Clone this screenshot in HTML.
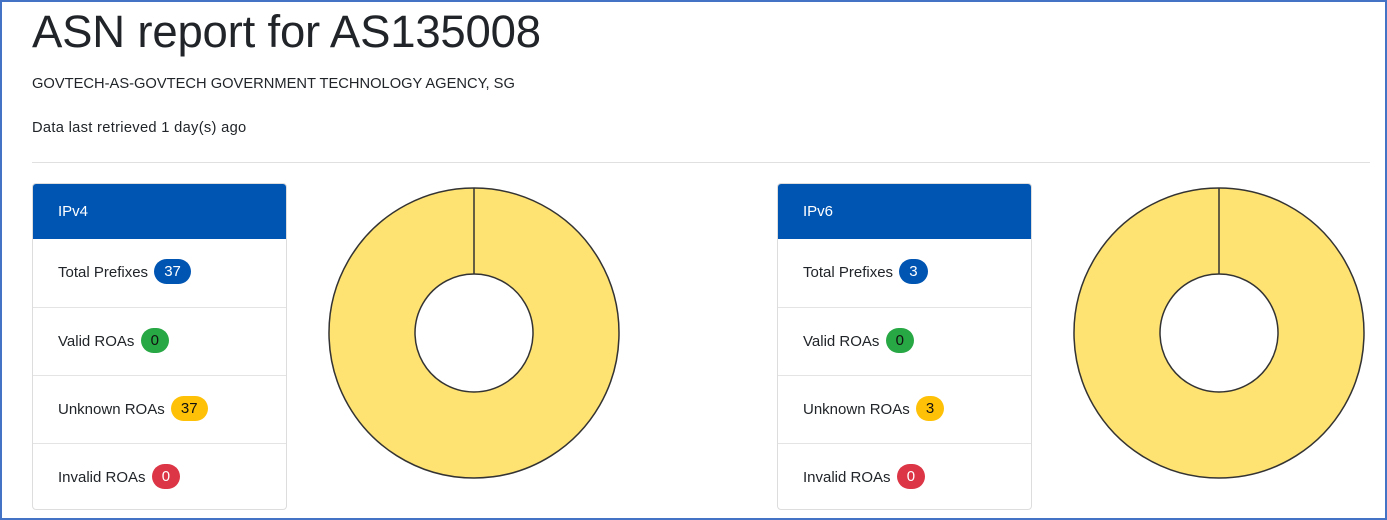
<!DOCTYPE html>
<html><head><style>
body{margin:0;width:1387px;height:520px;overflow:hidden;background:#fff;font-family:"Liberation Sans",sans-serif;color:#212529;position:relative}
.frame{position:absolute;left:0;top:0;width:1383px;height:516px;border:2px solid #4472c4}
h1{position:absolute;left:32px;top:6px;margin:0;font-size:45.5px;font-weight:400;letter-spacing:-0.2px}
.t{position:absolute;left:32px;font-size:14.7px}
hr{position:absolute;left:32px;top:162px;width:1338px;margin:0;border:0;border-top:1px solid #e0e0e0}
.card{position:absolute;top:183px;width:255px;height:327px;border:1px solid #ddd;border-radius:4px;overflow:hidden;box-sizing:border-box}
.hd{background:#0055b3;color:#fff;height:55px;line-height:55px;padding-left:25px;font-size:15px}
.row{height:68px;line-height:68px;padding-left:25px;font-size:15px;border-top:1px solid #e4e4e4;box-sizing:border-box}
.b{display:inline-block;height:25px;line-height:25px;border-radius:13px;padding:0 10px;font-size:15px;vertical-align:middle;margin-left:2px;margin-top:-3px}
.bl{background:#0055b3;color:#fff}.g{background:#28a745;color:#111}.y{background:#ffc107;color:#111}.r{background:#dc3545;color:#fff}
svg{position:absolute}
</style></head><body>
<div class="frame"></div>
<h1>ASN report for AS135008</h1>
<div class="t" style="top:76px">GOVTECH-AS-GOVTECH GOVERNMENT TECHNOLOGY AGENCY, SG</div>
<div class="t" style="top:120px;letter-spacing:0.3px">Data last retrieved 1 day(s) ago</div>
<hr>
<div class="card" style="left:32px"><div class="hd">IPv4</div>
<div class="row" style="border-top:0">Total Prefixes <span class="b bl">37</span></div>
<div class="row">Valid ROAs <span class="b g">0</span></div>
<div class="row">Unknown ROAs <span class="b y">37</span></div>
<div class="row">Invalid ROAs <span class="b r">0</span></div></div>
<div class="card" style="left:777px"><div class="hd">IPv6</div>
<div class="row" style="border-top:0">Total Prefixes <span class="b bl">3</span></div>
<div class="row">Valid ROAs <span class="b g">0</span></div>
<div class="row">Unknown ROAs <span class="b y">3</span></div>
<div class="row">Invalid ROAs <span class="b r">0</span></div></div>
<svg style="left:324px;top:183px" width="300" height="300"><path fill-rule="evenodd" d="M150 5A145 145 0 1 1 149.99 5ZM150 91A59 59 0 1 0 150.01 91Z" fill="#fee272" stroke="#333" stroke-width="1.5"/><line x1="150" y1="5" x2="150" y2="91" stroke="#333" stroke-width="1.5"/></svg>
<svg style="left:1069px;top:183px" width="300" height="300"><path fill-rule="evenodd" d="M150 5A145 145 0 1 1 149.99 5ZM150 91A59 59 0 1 0 150.01 91Z" fill="#fee272" stroke="#333" stroke-width="1.5"/><line x1="150" y1="5" x2="150" y2="91" stroke="#333" stroke-width="1.5"/></svg>
</body></html>
